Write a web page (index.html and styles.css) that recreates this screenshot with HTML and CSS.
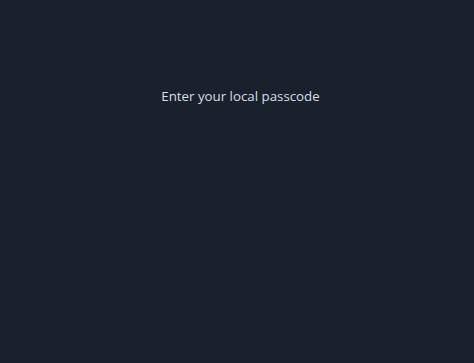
FILE: index.html
```html
<!DOCTYPE html>
<html>
<head>
<meta charset="utf-8">
<link rel="stylesheet" href="styles.css">
</head>
<body>
<main class="screen">
  <p class="prompt">Enter your local passcode</p>
</main>
</body>
</html>
```
FILE: styles.css
```css
html, body {
  margin: 0;
  padding: 0;
  width: 100%;
  height: 100%;
  background: #18212c;
}
.screen {
  display: flex;
  justify-content: center;
  padding-top: 86px;
  padding-left: 7px;
  height: 100%;
  box-sizing: border-box;
}
.prompt {
  margin: 0;
  font-family: "Open Sans", sans-serif;
  font-size: 13.3px;
  line-height: 20px;
  color: #d9dee4;
}
```
